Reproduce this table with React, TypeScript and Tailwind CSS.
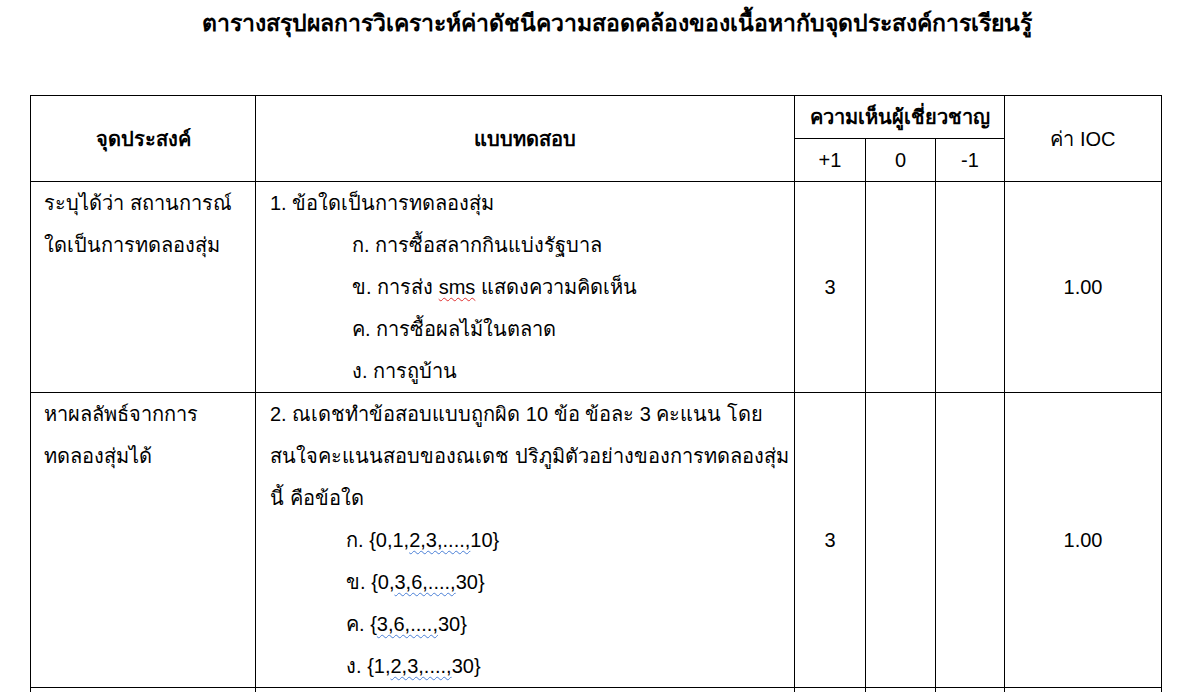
import React from "react";

type Row = {
  objective: string[];
  stem: string[];
  choices: React.ReactNode[];
  plus: string;
  ioc: string;
};

const wavyBlue = "underline decoration-wavy decoration-[#4a7fd6] decoration-1 underline-offset-[3px]";
const wavyRed = "underline decoration-wavy decoration-[#e03030] decoration-1 underline-offset-[3px]";

const rows: Row[] = [
  {
    objective: ["ระบุได้ว่า สถานการณ์", "ใดเป็นการทดลองสุ่ม"],
    stem: ["1. ข้อใดเป็นการทดลองสุ่ม"],
    choices: [
      "ก. การซื้อสลากกินแบ่งรัฐบาล",
      <>
        ข. การส่ง <span className={wavyRed}>sms</span> แสดงความคิดเห็น
      </>,
      "ค. การซื้อผลไม้ในตลาด",
      "ง. การถูบ้าน",
    ],
    plus: "3",
    ioc: "1.00",
  },
  {
    objective: ["หาผลลัพธ์จากการ", "ทดลองสุ่มได้"],
    stem: [
      "2. ณเดชทำข้อสอบแบบถูกผิด 10 ข้อ ข้อละ 3 คะแนน โดย",
      "สนใจคะแนนสอบของณเดช ปริภูมิตัวอย่างของการทดลองสุ่ม",
      "นี้ คือข้อใด",
    ],
    choices: [
      <>
        ก. {"{0,1,"}
        <span className={wavyBlue}>2,3,....,</span>
        {"10}"}
      </>,
      <>
        ข. {"{0,"}
        <span className={wavyBlue}>3,6,....,</span>
        {"30}"}
      </>,
      <>
        ค. {"{"}
        <span className={wavyBlue}>3,6,....,</span>
        {"30}"}
      </>,
      <>
        ง. {"{1,"}
        <span className={wavyBlue}>2,3,....,</span>
        {"30}"}
      </>,
    ],
    plus: "3",
    ioc: "1.00",
  },
  {
    objective: ["บอกผลที่ได้จาก", "การทดลองสุ่ม"],
    stem: ["3. สิ่งที่สนใจในการโยนลูกเต๋า 1 ลูก คือข้อใด"],
    choices: [],
    plus: "3",
    ioc: "1.00",
  },
];

export default function App() {
  return (
    <div className="min-h-screen bg-white text-black font-['Liberation_Sans','Noto_Sans',sans-serif]">
      <h1 className="pl-[52px] pt-[2px] text-center text-[23px] font-bold leading-[42px]">
        ตารางสรุปผลการวิเคราะห์ค่าดัชนีความสอดคล้องของเนื้อหากับจุดประสงค์การเรียนรู้
      </h1>

      <div className="pl-[30px] pt-[51px]">
        <table className="w-[1131px] table-fixed border-collapse text-[20px] leading-[42px]">
          <colgroup>
            <col className="w-[225px]" />
            <col className="w-[539px]" />
            <col className="w-[71px]" />
            <col className="w-[70px]" />
            <col className="w-[69px]" />
            <col className="w-[157px]" />
          </colgroup>
          <thead>
            <tr className="h-[43px]">
              <th rowSpan={2} className="border border-black text-center align-middle font-bold">
                จุดประสงค์
              </th>
              <th rowSpan={2} className="border border-black text-center align-middle font-bold">
                แบบทดสอบ
              </th>
              <th colSpan={3} className="border border-black text-center font-bold">
                ความเห็นผู้เชี่ยวชาญ
              </th>
              <th rowSpan={2} className="border border-black text-center align-middle font-normal">
                ค่า IOC
              </th>
            </tr>
            <tr className="h-[43px]">
              <th className="border border-black text-center font-normal">+1</th>
              <th className="border border-black text-center font-normal">0</th>
              <th className="border border-black text-center font-normal">-1</th>
            </tr>
          </thead>
          <tbody>
            {rows.map((r, i) => (
              <tr key={i}>
                <td className="border border-black px-[13px] align-top">
                  {r.objective.map((l, j) => (
                    <div key={j} className="whitespace-nowrap">{l}</div>
                  ))}
                </td>
                <td className="border border-black pl-[14px] align-top">
                  {r.stem.map((l, j) => (
                    <div key={j} className="whitespace-nowrap">{l}</div>
                  ))}
                  {r.choices.map((c, j) => (
                    <div key={j} className={i === 0 ? "whitespace-nowrap pl-[82px]" : "whitespace-nowrap pl-[76px]"}>
                      {c}
                    </div>
                  ))}
                </td>
                <td className="border border-black text-center align-middle">{r.plus}</td>
                <td className="border border-black"></td>
                <td className="border border-black"></td>
                <td className="border border-black text-center align-middle">{r.ioc}</td>
              </tr>
            ))}
          </tbody>
        </table>
      </div>
    </div>
  );
}
